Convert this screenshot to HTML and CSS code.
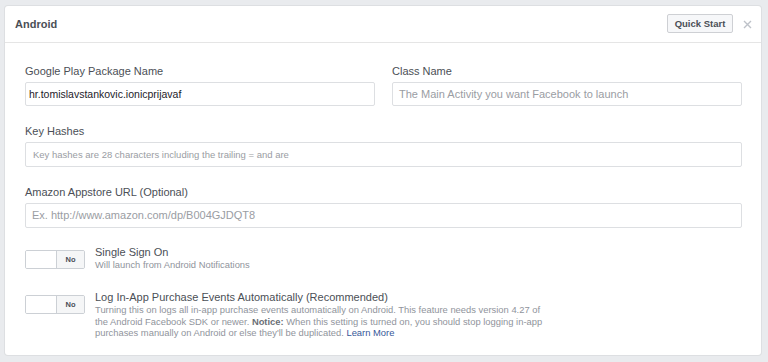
FILE: index.html
```html
<!DOCTYPE html>
<html>
<head>
<meta charset="utf-8">
<link rel="stylesheet" href="styles.css">
</head>
<body>
<div class="panel">
  <div class="header">
    <div class="title">Android</div>
    <div class="actions">
      <button class="btn">Quick Start</button>
      <svg class="close" width="9" height="9" viewBox="0 0 9 9"><path d="M1 1L8 8M8 1L1 8" stroke="#bec2c9" stroke-width="1.4" fill="none"/></svg>
    </div>
  </div>
  <div class="body">
    <div class="row two">
      <div class="field">
        <label class="label">Google Play Package Name</label>
        <div class="input value">hr.tomislavstankovic.ionicprijavaf</div>
      </div>
      <div class="field">
        <label class="label">Class Name</label>
        <div class="input ph">The Main Activity you want Facebook to launch</div>
      </div>
    </div>
    <div class="row">
      <div class="field">
        <label class="label">Key Hashes</label>
        <div class="input ph small">Key hashes are 28 characters including the trailing = and are</div>
      </div>
    </div>
    <div class="row">
      <div class="field">
        <label class="label">Amazon Appstore URL (Optional)</label>
        <div class="input ph">Ex. http://www.amazon.com/dp/B004GJDQT8</div>
      </div>
    </div>
    <div class="opt first">
      <div class="toggle"><span class="on"></span><span class="off">No</span></div>
      <div class="opt-text">
        <div class="opt-title">Single Sign On</div>
        <div class="opt-desc">Will launch from Android Notifications</div>
      </div>
    </div>
    <div class="opt second">
      <div class="toggle"><span class="on"></span><span class="off">No</span></div>
      <div class="opt-text">
        <div class="opt-title">Log In-App Purchase Events Automatically (Recommended)</div>
        <div class="opt-desc long">Turning this on logs all in-app purchase events automatically on Android. This feature needs version 4.27 of the Android Facebook SDK or newer. <b>Notice:</b> When this setting is turned on, you should stop logging in-app purchases manually on Android or else they'll be duplicated. <a class="link">Learn More</a></div>
      </div>
    </div>
  </div>
</div>
</body>
</html>
```

FILE: styles.css
```css
html, body {
  margin: 0;
  padding: 0;
}
body {
  background: #e9ebee;
  font-family: "Liberation Sans", Arial, sans-serif;
  padding: 6px 7px 7px 5px;
  width: 768px;
  height: 362px;
  box-sizing: border-box;
}
.panel {
  background: #fff;
  border-radius: 3px;
  box-shadow: 0 0 0 1px #dddfe2;
  width: 756px;
  height: 349px;
  box-sizing: border-box;
}
.header {
  height: 37px;
  border-bottom: 1px solid #e5e5e5;
  display: flex;
  align-items: center;
  justify-content: space-between;
  padding: 0 9px 0 10px;
  box-sizing: border-box;
}
.title {
  font-weight: bold;
  font-size: 11px;
  color: #4b4f56;
}
.actions {
  display: flex;
  align-items: center;
  gap: 10px;
}
.btn {
  font-family: inherit;
  font-weight: bold;
  font-size: 9.5px;
  color: #4b4f56;
  background: #f6f7f9;
  border: 1px solid #ced0d4;
  border-radius: 2px;
  height: 19px;
  width: 66px;
  padding: 0;
  margin-top: -1px;
}
.close {
  display: block;
  margin-top: 1px;
}
.body {
  padding: 21px 19px 0 20px;
}
.row {
  display: flex;
  margin-bottom: 18px;
}
.row.two {
  gap: 17px;
}
.field {
  flex: 1;
  display: flex;
  flex-direction: column;
}
.label {
  font-size: 11px;
  line-height: 14px;
  color: #4b4f56;
  margin-bottom: 4px;
}
.input {
  height: 25px;
  border: 1px solid #dddfe2;
  border-radius: 2px;
  box-sizing: border-box;
  font-size: 11px;
  line-height: 23px;
  padding: 0 6px;
  white-space: nowrap;
  overflow: hidden;
}
.row.two .input { height: 24px; line-height: 22px; }
.value { color: #1d2129; padding-left: 3px; font-size: 10.5px; }
.ph { color: #9a9da3; }
.ph.small { font-size: 9.5px; padding-left: 7px; }
.opt {
  display: flex;
  gap: 10px;
  align-items: flex-start;
}
.opt.first { margin-top: 17px; }
.opt.second { margin-top: 20px; }
.toggle {
  margin-top: 4px;
  width: 60px;
  height: 19px;
  border: 1px solid #ccd0d5;
  border-radius: 2px;
  box-sizing: border-box;
  display: flex;
  overflow: hidden;
}
.toggle .on {
  width: 30px;
  background: #fff;
  border-right: 1px solid #ccd0d5;
}
.toggle .off {
  flex: 1;
  background: #f5f6f7;
  font-size: 7.5px;
  font-weight: bold;
  color: #4b4f56;
  display: flex;
  align-items: center;
  justify-content: center;
}
.opt-title {
  font-size: 11px;
  line-height: 13px;
  color: #4b4f56;
}
.opt-desc {
  font-size: 9.4px;
  line-height: 11.75px;
  color: #90949c;
}
.opt-desc.long { width: 460px; }
.opt-desc b { color: #6b6f76; }
.link { color: #365899; }
```
